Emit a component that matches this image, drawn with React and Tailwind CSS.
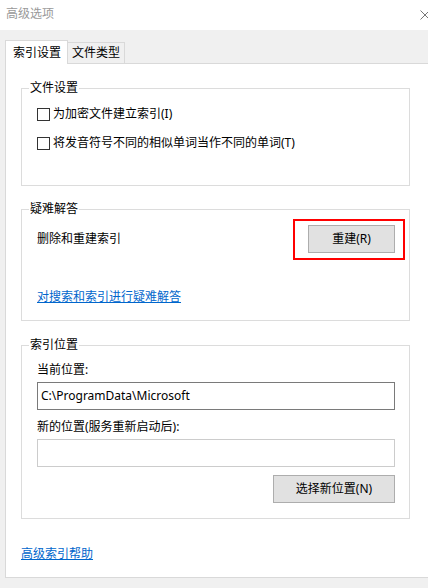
import React from "react";

const font = { fontFamily: '"Noto Sans", "Noto Sans CJK SC", sans-serif' };

// group box with caption sitting on the top border
const Group = ({ title, className, children }) => (
  <div className={"relative ml-[15px] w-[389px] border border-[#dcdcdc] " + className}>
    <span className="absolute left-[7px] -top-[9px] bg-white px-[1px] leading-[16px]">
      {title}
    </span>
    {children}
  </div>
);

const Check = ({ label, className }) => (
  <label className={"flex h-[16px] items-center gap-[3px] pl-[15px] " + className}>
    <span className="h-[13px] w-[13px] border border-[#333333] bg-white" />
    <span className="leading-[16px]">{label}</span>
  </label>
);

const Button = ({ children, className }) => (
  <button
    type="button"
    className={
      "h-[28px] border border-[#adadad] bg-[#e1e1e1] text-[12px] leading-[16px] text-black " +
      className
    }
  >
    {children}
  </button>
);

export default function App() {
  return (
    <div
      className="relative h-[588px] w-[428px] overflow-hidden bg-[#f0f0f0] text-[12px] text-black"
      style={font}
    >
      {/* ================= TITLE BAR ================= */}
      <div className="flex h-[30px] items-center bg-white pb-[2px] pl-[6px]">
        <span className="leading-[16px] text-[#999999]">高级选项</span>
        <svg
          className="ml-auto mr-[-2px] mt-[2px]"
          width="10"
          height="10"
          viewBox="0 0 10 10"
          fill="none"
          stroke="#777777"
          strokeWidth="1"
        >
          <path d="M0.5 0.5 L9.5 9.5 M9.5 0.5 L0.5 9.5" />
        </svg>
      </div>

      {/* ================= TABS ================= */}
      <div className="flex h-[33px] items-end pl-[5px]">
        <div className="relative z-10 -mb-px flex h-[24px] w-[63px] items-center border border-b-0 border-[#d9d9d9] bg-white pl-[7px]">
          <span className="leading-[16px]">索引设置</span>
        </div>
        <div className="flex h-[21px] w-[57px] items-center border-r border-t border-[#d9d9d9] bg-[#f0f0f0] pl-[4px]">
          <span className="leading-[16px]">文件类型</span>
        </div>
      </div>

      {/* ================= PANEL ================= */}
      <div className="ml-[5px] h-[515px] w-[423px] border-b border-l border-t border-[#d9d9d9] bg-white">
        {/* FILE SETTINGS */}
        <Group title="文件设置" className="mt-[24px] h-[98px]">
          <Check label="为加密文件建立索引(I)" className="pt-0 mt-[17px]" />
          <Check label="将发音符号不同的相似单词当作不同的单词(T)" className="mt-[13px]" />
        </Group>

        {/* TROUBLESHOOT */}
        <Group title="疑难解答" className="mt-[23px] h-[112px]">
          <div className="flex items-center justify-between pl-[15px] pr-[14px] pt-[15px]">
            <span className="leading-[16px]">删除和重建索引</span>
            <div className="relative">
              <Button className="w-[87px]">重建(R)</Button>
              <div className="pointer-events-none absolute -bottom-[7px] -left-[15px] -right-[10px] -top-[6px] border-2 border-[#ff0000]" />
            </div>
          </div>
          <a href="#" className="mt-[36px] ml-[15px] block w-fit leading-[16px] text-[#0066cc] underline">
            对搜索和索引进行疑难解答
          </a>
        </Group>

        {/* INDEX LOCATION */}
        <Group title="索引位置" className="mt-[24px] h-[174px]">
          <div className="pl-[15px] pr-[14px] pt-[16px]">
            <div className="leading-[16px]">当前位置:</div>
            <div className="mt-[4px] flex h-[28px] w-[358px] items-center border border-[#7a7a7a] px-[3px]">
              <span className="leading-[16px]">C:\ProgramData\Microsoft</span>
            </div>
            <div className="mt-[9px] leading-[16px]">新的位置(服务重新启动后):</div>
            <div className="mt-[4px] h-[28px] w-[358px] border border-[#cccccc] bg-white" />
            <div className="mt-[8px] flex justify-end">
              <Button className="w-[122px]">选择新位置(N)</Button>
            </div>
          </div>
        </Group>

        <a href="#" className="mt-[27px] ml-[15px] block w-fit leading-[16px] text-[#0066cc] underline">
          高级索引帮助
        </a>
      </div>
    </div>
  );
}
